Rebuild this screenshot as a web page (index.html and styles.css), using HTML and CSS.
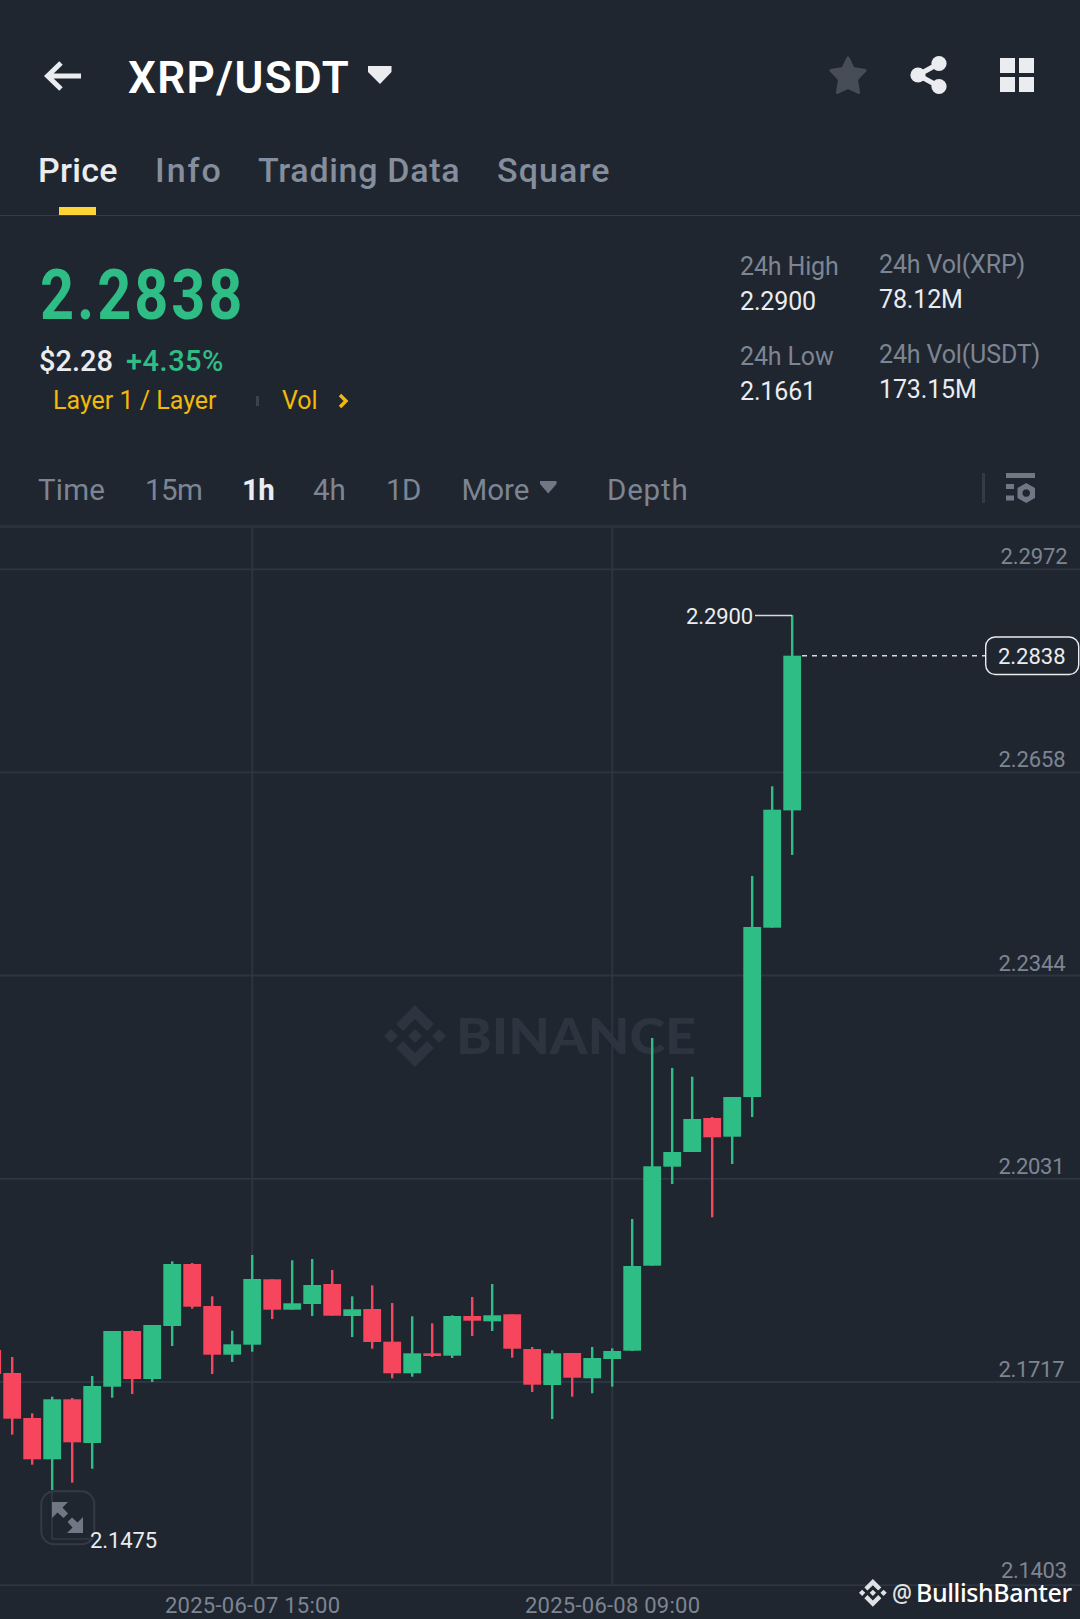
FILE: index.html
```html
<!DOCTYPE html>
<html lang="en">
<head>
<meta charset="utf-8">
<title>XRP/USDT</title>
<link rel="stylesheet" href="styles.css">
</head>
<body>
<header class="topbar">
  <svg class="back" width="38" height="30" viewBox="0 0 38 30"><path d="M17 2 3.500 15 17 28M4 15H37" fill="none" stroke="#eaecef" stroke-width="5"/></svg>
  <h1 class="pair">XRP/USDT</h1>
  <svg class="pair-caret" width="24" height="18" viewBox="0 0 24 18"><path d="M0 0H23.500V6L12 18 0 6Z" fill="#eaecef"/></svg>
  <svg class="star" width="38" height="39" viewBox="0 0 38 39"><path d="M19 2 24 12.500 36 14.500 27.500 23.500 29.500 36.500 19 31.500 8.500 36.500 10.500 23.500 2 14.500 14 12.500Z" fill="#474d57" stroke="#474d57" stroke-width="3" stroke-linejoin="round"/></svg>
  <svg class="share" width="38" height="40" viewBox="0 0 38 40"><path d="M29 8.500 8 20 29 31.500" fill="none" stroke="#eaecef" stroke-width="5"/><g fill="#eaecef"><circle cx="29" cy="8.500" r="7.600"/><circle cx="8" cy="20" r="7.600"/><circle cx="29" cy="31.500" r="7.600"/></g></svg>
  <svg class="apps" width="34" height="34" viewBox="0 0 34 34"><path d="M0 0H15V15H0ZM19 0H34V15H19ZM0 19H15V34H0ZM19 19H34V34H19Z" fill="#eaecef"/></svg>
</header>

<nav class="tabs">
  <a class="tab tab-price active">Price</a>
  <a class="tab tab-info">Info</a>
  <a class="tab tab-data">Trading Data</a>
  <a class="tab tab-square">Square</a>
</nav>

<section class="summary">
  <div class="quote">
    <div class="last">2.2838</div>
    <div class="change"><span class="fiat">$2.28</span><span class="percent">+4.35%</span></div>
    <div class="tags">
      <span class="tag-layer">Layer 1 / Layer</span>
      <i class="tag-sep"></i>
      <span class="tag-vol">Vol</span>
      <svg width="11" height="16" viewBox="0 0 11 16"><path d="M2 2 8 8 2 14" fill="none" stroke="#f0b90b" stroke-width="3.400"/></svg>
    </div>
  </div>
  <dl class="stats range">
    <dt>24h High</dt><dd>2.2900</dd>
    <dt>24h Low</dt><dd>2.1661</dd>
  </dl>
  <dl class="stats volume">
    <dt>24h Vol(XRP)</dt><dd>78.12M</dd>
    <dt>24h Vol(USDT)</dt><dd>173.15M</dd>
  </dl>
</section>

<nav class="intervals">
  <span class="iv iv-time">Time</span>
  <span class="iv iv-15m">15m</span>
  <span class="iv iv-1h active">1h</span>
  <span class="iv iv-4h">4h</span>
  <span class="iv iv-1d">1D</span>
  <span class="iv iv-more">More</span>
  <svg class="more-caret" width="17" height="13" viewBox="0 0 17 13"><path d="M0 0H16.500V3L8.200 12.500 0 3Z" fill="#707785"/></svg>
  <span class="iv iv-depth">Depth</span>
  <i class="iv-sep"></i>
  <svg class="settings" width="30" height="31" viewBox="0 0 30 31"><path d="M0 0H29V5H0ZM0 11H8V16H0ZM0 22.500H8V27.500H0Z" fill="#707785"/><path d="M20.200 10 29 15V25L20.200 30 11.500 25V15ZM20.200 16.200a3.800 3.800 0 1 0 .01 0Z" fill="#707785" fill-rule="evenodd"/></svg>
</nav>

<svg class="chart" width="1080" height="1091" viewBox="0 528 1080 1091">
  <defs>
    <g id="logo">
      <path d="M31 0 50 19 43 26 31 14 19 26 12 19Z"/>
      <path d="M31 62 50 43 43 36 31 48 19 36 12 43Z"/>
      <path d="M31 24 38 31 31 38 24 31ZM7 24 14 31 7 38 0 31ZM55 24 62 31 55 38 48 31Z"/>
    </g>
  </defs>
  <g class="brand">
    <use href="#logo" x="384" y="1005"/>
    <text x="456" y="1053.500" textLength="240" lengthAdjust="spacingAndGlyphs">BINANCE</text>
  </g>
  <path class="grid" d="M0 569.300H1080M0 772.300H1080M0 975.500H1080M0 1178.800H1080M0 1382H1080M0 1585.200H1080M252.300 528V1585M612.300 528V1585"/>
  <g id="candles"></g>

  <path class="leader" d="M755 615.500H792"/>
  <text class="mark" x="686" y="624" textLength="67">2.2900</text>
  <path class="leader dashed" d="M802 655.700H985"/>
  <rect class="tagbox" x="985.700" y="637" width="93" height="37.500" rx="9.500"/>
  <text class="mark" x="998" y="664" textLength="67.500">2.2838</text>

  <g class="axis">
    <text x="1000.500" y="564" textLength="67">2.2972</text>
    <text x="998.500" y="767.300" textLength="67">2.2658</text>
    <text x="998.500" y="971" textLength="67">2.2344</text>
    <text x="998.500" y="1174" textLength="66">2.2031</text>
    <text x="998.500" y="1377" textLength="66">2.1717</text>
    <text x="1001" y="1578" textLength="66">2.1403</text>
    <text x="165" y="1613" textLength="175">2025-06-07 15:00</text>
    <text x="525" y="1613" textLength="175">2025-06-08 09:00</text>
  </g>

  <g class="expand">
    <rect x="41.300" y="1491.300" width="53" height="53" rx="13"/>
    <path class="expand-line" d="M52 1492V1539H90"/>
    <path class="expand-arrow" d="M52 1502H68L62.500 1507.500 68 1513.500 63.500 1518 57.500 1512.500 52 1518ZM83 1533H67L72.500 1527.500 67.500 1522 72 1517.500 77.500 1522.500 83 1517Z"/>
  </g>
  <text class="mark" x="90" y="1548" textLength="67">2.1475</text>

  <g class="credit">
    <use href="#logo" transform="translate(859 1579) scale(.447)"/>
    <text x="892" y="1602" class="at" textLength="20" lengthAdjust="spacingAndGlyphs">@</text>
    <text x="916" y="1602" textLength="156">BullishBanter</text>
  </g>
</svg>
<script src="chart.js"></script>
</body>
</html>
```
FILE: styles.css
```css
* { box-sizing: border-box; }
body {
  margin: 0;
  width: 1080px;
  height: 1619px;
  overflow: hidden;
  background: #202630;
  color: #eaecef;
  font-family: Roboto, "Liberation Sans", sans-serif;
}
svg { display: block; flex: none; }

.topbar { display: flex; align-items: center; height: 122px; padding: 30px 46px 0 44px; }
.pair { margin: 0 0 0 46px; width: 240px; font-size: 44px; font-weight: 600; line-height: 50px; letter-spacing: 1.400px; color: #fff; white-space: nowrap; padding-top: 4px; }
.pair-caret { margin-top: -2px; }
.star { margin-left: 437px; margin-top: -1px; }
.share { margin-left: 43px; margin-top: -2px; }
.apps { margin-left: 52px; margin-top: -2px; }

.tabs { display: flex; height: 94px; padding: 25px 0 0 38px; border-bottom: 1px solid #333b47; }
.tab { height: 68px; font-size: 34px; font-weight: 500; line-height: 46px; letter-spacing: .7px; color: #848e9c; white-space: nowrap; }
.tab.active { color: #eaecef; letter-spacing: .3px; display: flex; flex-direction: column; justify-content: space-between; }
.tab.active::after { content: ""; width: 37px; height: 8px; margin-left: 21px; background: #fcd535; }
.tab-price { width: 117px; }
.tab-info { width: 103px; letter-spacing: 2px; }
.tab-data { width: 239px; }
.tab-square { letter-spacing: 1.100px; }

.summary { display: flex; height: 234px; padding-left: 39px; }
.quote { width: 701px; padding-top: 44px; }
.last { font-size: 70px; font-weight: 700; line-height: 70px; color: #2ebd85; letter-spacing: 3.400px; transform: translateX(1px) scaleX(.85); transform-origin: left; }
.change { display: flex; margin-top: 14px; font-size: 29px; line-height: 34px; font-weight: 500; }
.fiat { width: 87px; }
.percent { color: #2ebd85; letter-spacing: .5px; }
.tags { display: flex; align-items: center; margin-top: 8px; padding-left: 14px; font-size: 25px; line-height: 30px; color: #f0b90b; white-space: nowrap; }
.tag-layer { width: 203px; }
.tag-sep { width: 3px; height: 10px; background: #3b424e; }
.tag-vol { width: 56px; margin-left: 23px; }

.stats { margin: 0; font-size: 25px; line-height: 30px; white-space: nowrap; letter-spacing: -.15px; }
.range { width: 139px; padding-top: 36px; }
.volume { padding-top: 34px; }
.stats dt { color: #7d8592; }
.stats dd { margin: 5px 0 25px; }

.intervals { display: flex; align-items: center; height: 78px; border-bottom: 3px solid #2a313b; padding: 4px 0 0 38px; font-size: 29.500px; color: #7d8592; }
.iv { white-space: nowrap; }
.iv.active { color: #eaecef; font-weight: 700; }
.iv-time { width: 107px; letter-spacing: .2px; }
.iv-15m { width: 97px; letter-spacing: -.6px; }
.iv-1h { width: 71px; letter-spacing: -.8px; }
.iv-4h { width: 73px; }
.iv-1d { width: 75.500px; letter-spacing: -.5px; }
.iv-more { width: 78.500px; }
.more-caret { margin-top: -5px; }
.iv-depth { width: 375px; margin-left: 50px; letter-spacing: .8px; }
.iv-sep { width: 2.500px; height: 30px; margin-top: -3px; background: #333b47; }
.settings { margin-left: 21.500px; margin-top: -2px; }

.chart text { white-space: pre; }
.grid { fill: none; stroke: #2d3540; stroke-width: 1.800; }
.brand { fill: #2d333f; }
.brand text { font: 900 48.500px Lato, sans-serif; }
.up { fill: #2ebd85; }
.down { fill: #f6465d; }
.leader { fill: none; stroke: #d5d8dd; stroke-width: 1.500; }
.dashed { stroke-dasharray: 5 5; }
.tagbox { fill: #202630; stroke: #eaecef; stroke-width: 1.400; }
.mark { font-size: 22px; fill: #eaecef; }
.axis { font-size: 22px; fill: #7d8592; }
.expand rect { fill: #202630; stroke: #333a45; stroke-width: 2; }
.expand-line { fill: none; stroke: #333a45; stroke-width: 1.500; }
.expand-arrow { fill: #707785; }
.credit { fill: #fff; font: 500 25px "Noto Sans", sans-serif; }
.credit use, .credit .at { fill: #dfe1e4; }
```
FILE: chart.js
```js
// Hourly candles as [direction, body top, body bottom, wick top, wick bottom], one every 20px.
const candles = [
  ["down",1350,1374,1350,1374],
  ["down",1373,1418.7,1357,1434.7],["down",1418,1459.3,1413.3,1464.7],["up",1399.3,1459.3,1396.7,1490],
  ["down",1399.3,1442.3,1398,1482.7],["up",1386,1443,1376,1468.7],["up",1331,1386.7,1331,1397.7],
  ["down",1331,1379,1330.3,1394],["up",1325,1379,1325,1382],["up",1264,1326,1261.3,1346],
  ["down",1264,1306.7,1263,1308.7],["down",1306,1354.7,1296.3,1374],["up",1344.3,1354.7,1330.7,1362],
  ["up",1279,1344.7,1255,1351.7],["down",1279.3,1309.7,1279.3,1319],["up",1303.3,1309.7,1260.3,1309.7],
  ["up",1285,1304,1259,1316],["down",1284,1315.7,1270,1315.7],["up",1309.3,1316,1296.3,1337],
  ["down",1309,1342,1285.3,1348.7],["down",1341.7,1373.3,1303,1378.3],["up",1353.3,1373.3,1316.3,1376.7],
  ["down",1353.3,1356,1323.3,1357],["up",1316,1355.7,1315.3,1358],["down",1316,1320.7,1297,1336],
  ["up",1315.3,1321.3,1284,1331],["down",1314.3,1348.7,1314.3,1357.7],["down",1349,1384.7,1347,1392],
  ["up",1353.3,1385,1350.3,1419],["down",1353,1377.7,1353,1396.7],["up",1358,1378.3,1347,1393.3],
  ["up",1351,1359,1348.3,1386.7],["up",1266,1350.7,1219,1351],["up",1166.3,1265.7,1038,1265.7],
  ["up",1152,1166.7,1068,1184],["up",1119,1152,1076.7,1152],["down",1118,1137.3,1117,1217.3],
  ["up",1097,1136.7,1097,1164],["up",927,1097,876,1117],["up",809.7,927.7,786.3,927.7],
  ["up",655.7,810.4,615,855]
];
const layer = document.getElementById("candles");
const bar = (cls, x, y, w, h) => {
  const r = document.createElementNS("http://www.w3.org/2000/svg", "rect");
  r.setAttribute("class", cls);
  r.setAttribute("x", x);
  r.setAttribute("y", y);
  r.setAttribute("width", w);
  r.setAttribute("height", h);
  layer.appendChild(r);
};
candles.forEach(([cls, top, bottom, high, low], i) => {
  const x = 20 * i - 7.8;
  bar(cls, x - 8.9, top, 17.8, bottom - top);
  bar(cls, x - 1.2, high, 2.4, low - high);
});
```
